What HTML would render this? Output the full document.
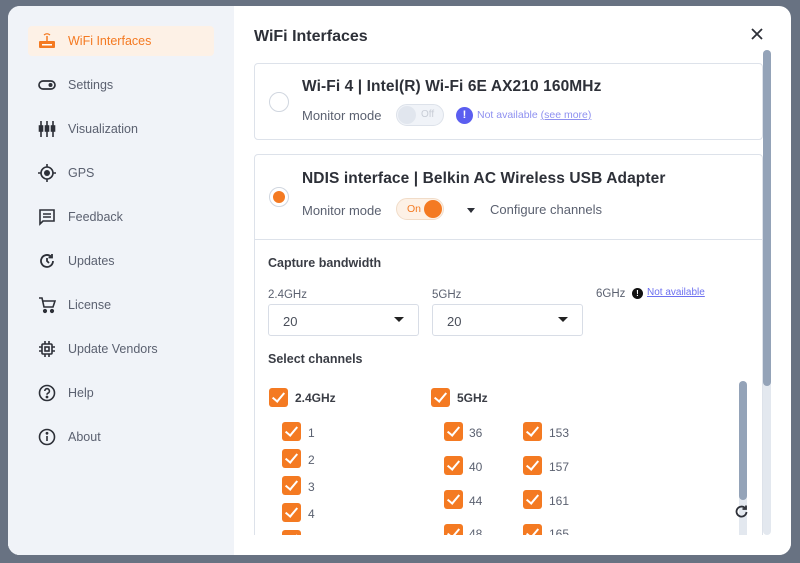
<!DOCTYPE html>
<html><head><meta charset="utf-8"><style>
*{box-sizing:border-box;margin:0;padding:0}
body{width:800px;height:563px;background:#687282;font-family:"Liberation Sans","DejaVu Sans",sans-serif;position:relative;overflow:hidden}
.modal{position:absolute;left:8px;top:6px;width:783px;height:549px;background:#fff;border-radius:12px;overflow:hidden}
.side{position:absolute;left:0;top:0;width:226px;height:549px;background:#f0f3f8}
.item{position:absolute;left:20px;width:186px;height:30px;display:flex;align-items:center;font-size:12.5px;color:#5b6170}
.item svg{position:absolute;left:10px}
.item span{position:absolute;left:40px}
.item.active{background:#fdf1e6;border-radius:4px;color:#f47a22}
.t{position:absolute;color:#2d3038}
.card{position:absolute;left:246px;width:509px;border:1px solid #dde2ea;border-radius:4px;background:#fff}
.g{color:#5b6170;font-size:13px;position:absolute}
.cb{position:absolute;width:19px;height:19px;background:#f47a22;border-radius:3px}
.cb::after{content:"";position:absolute;left:6px;top:2px;width:5px;height:10px;border:solid #fff;border-width:0 2px 2px 0;transform:rotate(40deg)}
.n{position:absolute;font-size:12px;color:#5b6170}
.sel{position:absolute;top:298px;width:151px;height:32px;border:1px solid #d8dde6;border-radius:3px;font-size:13px;color:#4a4f5a;padding:9px 0 0 14px}
.sel::after{content:"";position:absolute;right:14px;top:12px;border:5px solid transparent;border-top-color:#222;border-bottom:none}
.tt{font-size:15.5px;font-weight:600;letter-spacing:0.1px}
</style></head><body>
<div class="modal">
<div class="side">
 <div class="item active" style="top:20px"><svg width="18" height="18" viewBox="0 0 18 18"><rect x="1" y="9" width="16" height="7" rx="1" fill="#f47a22"/><rect x="4" y="12" width="10" height="1.5" fill="#fff"/><path d="M9 9V4" stroke="#f47a22" stroke-width="1.5"/><path d="M6 3q3-2.5 6 0" stroke="#f47a22" stroke-width="1.3" fill="none"/></svg><span>WiFi Interfaces</span></div>
 <div class="item" style="top:64px"><svg width="18" height="18" viewBox="0 0 18 18"><rect x="1" y="5" width="16" height="8" rx="4" fill="none" stroke="#2d3038" stroke-width="1.7"/><circle cx="12.5" cy="9" r="2" fill="#2d3038"/></svg><span>Settings</span></div>
 <div class="item" style="top:108px"><svg width="18" height="18" viewBox="0 0 18 18" stroke="#2d3038" stroke-width="1.6" fill="none"><path d="M3 1v16M9 1v16M15 1v16"/><rect x="1.5" y="6" width="3" height="5" fill="#2d3038"/><rect x="7.5" y="6" width="3" height="5" fill="#2d3038"/><rect x="13.5" y="6" width="3" height="5" fill="#2d3038"/></svg><span>Visualization</span></div>
 <div class="item" style="top:152px"><svg width="18" height="18" viewBox="0 0 18 18"><circle cx="9" cy="9" r="6" fill="none" stroke="#2d3038" stroke-width="1.6"/><circle cx="9" cy="9" r="3" fill="#2d3038"/><path d="M9 0v3M9 15v3M0 9h3M15 9h3" stroke="#2d3038" stroke-width="1.6"/></svg><span>GPS</span></div>
 <div class="item" style="top:196px"><svg width="18" height="18" viewBox="0 0 18 18" fill="none" stroke="#2d3038" stroke-width="1.6"><path d="M2 2h14v11H5l-3 3z"/><path d="M5 6h8M5 9h8"/></svg><span>Feedback</span></div>
 <div class="item" style="top:240px"><svg width="18" height="18" viewBox="0 0 18 18" fill="none" stroke="#2d3038" stroke-width="1.8"><path d="M15 9a6 6 0 1 1-2-4.5"/><path d="M14 2v3.5h-3.5"/><path d="M9 6v3l2 2"/></svg><span>Updates</span></div>
 <div class="item" style="top:284px"><svg width="18" height="18" viewBox="0 0 18 18" fill="none" stroke="#2d3038" stroke-width="1.6"><path d="M1 2h3l2 9h9l2-6H5"/><circle cx="7" cy="15" r="1.3" fill="#2d3038"/><circle cx="14" cy="15" r="1.3" fill="#2d3038"/></svg><span>License</span></div>
 <div class="item" style="top:328px"><svg width="18" height="18" viewBox="0 0 18 18" fill="none" stroke="#2d3038" stroke-width="1.6"><rect x="4" y="4" width="10" height="10" rx="1"/><rect x="7" y="7" width="4" height="4"/><path d="M7 1v3M11 1v3M7 14v3M11 14v3M1 7h3M1 11h3M14 7h3M14 11h3"/></svg><span>Update Vendors</span></div>
 <div class="item" style="top:372px"><svg width="18" height="18" viewBox="0 0 18 18" fill="none" stroke="#2d3038" stroke-width="1.6"><circle cx="9" cy="9" r="7.5"/><path d="M6.8 7a2.3 2.3 0 1 1 3 2.2c-.6.3-.8.7-.8 1.5"/><circle cx="9" cy="13" r=".6" fill="#2d3038"/></svg><span>Help</span></div>
 <div class="item" style="top:416px"><svg width="18" height="18" viewBox="0 0 18 18" fill="none" stroke="#2d3038" stroke-width="1.6"><circle cx="9" cy="9" r="7.5"/><path d="M9 8v5"/><circle cx="9" cy="5.3" r=".6" fill="#2d3038"/></svg><span>About</span></div>
</div>
<div class="t" style="left:246px;top:22px;font-size:16px;font-weight:600">WiFi Interfaces</div>
<svg style="position:absolute;left:742px;top:21px" width="14" height="14" viewBox="0 0 14 14"><path d="M2 2l10 10M12 2L2 12" stroke="#2d3038" stroke-width="1.8"/></svg>
<div style="position:absolute;left:755px;top:44px;width:8px;height:485px;background:#e3e8ef;border-radius:4px"></div>
<div style="position:absolute;left:755px;top:44px;width:8px;height:336px;background:#94a3b8;border-radius:4px"></div>

<div class="card" style="top:57px;height:77px">
 <div style="position:absolute;left:14px;top:28px;width:20px;height:20px;border:1px solid #d0d6df;border-radius:50%"></div>
 <div class="t tt" style="left:47px;top:14px">Wi-Fi 4 | Intel(R) Wi-Fi 6E AX210 160MHz</div>
 <div class="g" style="left:47px;top:44px">Monitor mode</div>
 <div style="position:absolute;left:141px;top:40px;width:48px;height:22px;border-radius:11px;background:#f0f3f8;border:1px solid #dde2ea"><div style="position:absolute;left:1px;top:1px;width:18px;height:18px;border-radius:50%;background:#e1e6ee"></div><span style="position:absolute;left:24px;top:0;line-height:20px;font-size:10px;color:#c8cdd6">Off</span></div>
 <div style="position:absolute;left:201px;top:43px;width:17px;height:17px;border-radius:50%;background:#5b5ef0;color:#fff;font-size:11px;font-weight:bold;text-align:center;line-height:17px">!</div>
 <div style="position:absolute;left:222px;top:45px;font-size:10.5px;color:#8e90f0">Not available <u>(see more)</u></div>
</div>

<div class="card" style="top:148px;height:420px">
 <div style="position:absolute;left:14px;top:32px;width:20px;height:20px;border:1px solid #d0d6df;border-radius:50%"><div style="position:absolute;left:3px;top:3px;width:12px;height:12px;border-radius:50%;background:#f47a22"></div></div>
 <div class="t tt" style="left:47px;top:15px">NDIS interface | Belkin AC Wireless USB Adapter</div>
 <div class="g" style="left:47px;top:48px">Monitor mode</div>
 <div style="position:absolute;left:141px;top:43px;width:48px;height:22px;border-radius:11px;background:#fdf1e6;border:1px solid #f1dcc8"><span style="position:absolute;left:10px;top:0;line-height:20px;font-size:10.5px;color:#f47a22">On</span><div style="position:absolute;right:1px;top:1px;width:18px;height:18px;border-radius:50%;background:#f47a22"></div></div>
 <div style="position:absolute;left:212px;top:53px;border:4px solid transparent;border-top:5px solid #2d3038;border-bottom:none"></div>
 <div class="g" style="left:235px;top:47px">Configure channels</div>
 <div style="position:absolute;left:0;top:84px;width:507px;height:1px;background:#dde2ea"></div>
</div>
<div class="t" style="left:260px;top:250px;font-size:12.5px;font-weight:bold;color:#3a3d45">Capture bandwidth</div>
<div class="g" style="left:260px;top:283px;font-size:11.5px">2.4GHz</div>
<div class="g" style="left:424px;top:283px;font-size:11.5px">5GHz</div>
<div class="g" style="left:588px;top:282px;font-size:11.5px">6GHz</div>
<div style="position:absolute;left:624px;top:282px;width:11px;height:11px;border-radius:50%;background:#111;color:#fff;font-size:8px;font-weight:bold;text-align:center;line-height:11px">!</div>
<div style="position:absolute;left:639px;top:281px;font-size:10px;color:#6d70f0;text-decoration:underline">Not available</div>
<div class="sel" style="left:260px">20</div>
<div class="sel" style="left:424px">20</div>
<div class="t" style="left:260px;top:346px;font-size:12.5px;font-weight:bold;color:#3a3d45">Select channels</div>
<div class="cb" style="left:261px;top:382px"></div><div class="t" style="left:287px;top:385px;font-size:12px;font-weight:bold;color:#3a3d45">2.4GHz</div>
<div class="cb" style="left:423px;top:382px"></div><div class="t" style="left:449px;top:385px;font-size:12px;font-weight:bold;color:#3a3d45">5GHz</div>
<div class="cb" style="left:274px;top:416px"></div><div class="n" style="left:300px;top:420px">1</div>
<div class="cb" style="left:274px;top:443px"></div><div class="n" style="left:300px;top:447px">2</div>
<div class="cb" style="left:274px;top:470px"></div><div class="n" style="left:300px;top:474px">3</div>
<div class="cb" style="left:274px;top:497px"></div><div class="n" style="left:300px;top:501px">4</div>
<div class="cb" style="left:274px;top:524px"></div>
<div class="cb" style="left:436px;top:416px"></div><div class="n" style="left:461px;top:420px">36</div>
<div class="cb" style="left:436px;top:450px"></div><div class="n" style="left:461px;top:454px">40</div>
<div class="cb" style="left:436px;top:484px"></div><div class="n" style="left:461px;top:488px">44</div>
<div class="cb" style="left:436px;top:518px"></div><div class="n" style="left:461px;top:521px">48</div>
<div class="cb" style="left:515px;top:416px"></div><div class="n" style="left:541px;top:420px">153</div>
<div class="cb" style="left:515px;top:450px"></div><div class="n" style="left:541px;top:454px">157</div>
<div class="cb" style="left:515px;top:484px"></div><div class="n" style="left:541px;top:488px">161</div>
<div class="cb" style="left:515px;top:518px"></div><div class="n" style="left:541px;top:521px">165</div>
<div style="position:absolute;left:731px;top:375px;width:8px;height:160px;background:#e3e8ef;border-radius:4px"></div>
<div style="position:absolute;left:731px;top:375px;width:8px;height:119px;background:#94a3b8;border-radius:4px"></div>
<svg style="position:absolute;left:726px;top:498px" width="15" height="15" viewBox="0 0 15 15" fill="none" stroke="#2d3038" stroke-width="1.8"><path d="M12.5 8a5 5 0 1 1-1.5-4"/><path d="M12 1.5v3.5H8.5"/></svg>
<div style="position:absolute;left:0;top:529px;width:783px;height:20px;background:#fff"></div>
<div style="position:absolute;left:0;top:0;width:226px;height:549px;background:#f0f3f8;clip-path:inset(529px 0 0 0)"></div>
</div>
</body></html>
